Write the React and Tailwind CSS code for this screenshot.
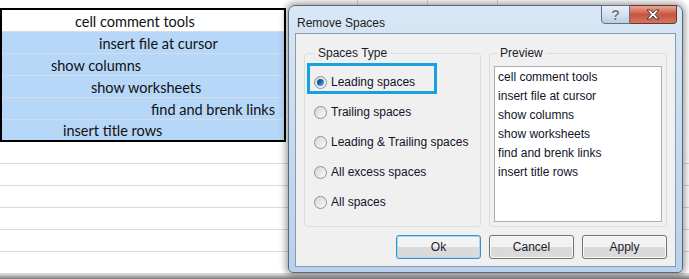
import React from 'react';

const sheetRows = [
  { text: 'cell comment tools', pl: 'pl-[73px]', sel: false },
  { text: 'insert file at cursor', pl: 'pl-[97px]', sel: true },
  { text: 'show columns', pl: 'pl-[49px]', sel: true },
  { text: 'show worksheets', pl: 'pl-[89px]', sel: true },
  { text: 'find and brenk links', pl: 'pl-[149px]', sel: true },
  { text: 'insert title rows', pl: 'pl-[61px]', sel: true },
];

const options = [
  'Leading spaces',
  'Trailing spaces',
  'Leading & Trailing spaces',
  'All excess spaces',
  'All spaces',
];

const previewLines = [
  'cell comment tools',
  'insert file at cursor',
  'show columns',
  'show worksheets',
  'find and brenk links',
  'insert title rows',
];

const Radio = ({ checked }) => (
  <span className="relative w-[13px] h-[13px] rounded-full border border-[#8f8f8f] bg-gradient-to-br from-[#d6d6d6] to-[#fbfbfb] flex items-center justify-center shrink-0">
    {checked && (
      <span className="w-[7px] h-[7px] rounded-full bg-gradient-to-br from-[#0b3f78] via-[#1e67b4] to-[#7fc0f5]" />
    )}
  </span>
);

const Button = ({ label, primary }) => (
  <button
    className={
      'w-[85px] h-[24px] rounded-[3px] border bg-gradient-to-b from-[#f2f2f2] from-50% to-[#dadada] to-50% text-[12px] text-[#1a1a2e] ' +
      (primary ? 'border-[#3c8fc4] shadow-[inset_0_0_0_1px_#9fdcf7]' : 'border-[#707070] shadow-[inset_0_0_0_1px_#fbfbfb]')
    }
  >
    {label}
  </button>
);

const Dialog = () => (
  <div className="absolute left-[288px] top-[5px] w-[395px] h-[268px] rounded-t-[7px] rounded-b-[5px] border border-[#58687a] bg-gradient-to-b from-[#d9e7f5] via-[#c6daf0] to-[#b9d1ec] shadow-[0_0_7px_2px_rgba(0,0,0,0.4)] flex flex-col px-[6px] pb-[5px] font-['Liberation_Sans',Arial,sans-serif]">
    {/* title bar */}
    <div className="h-[27px] flex items-start justify-between">
      <span className="pl-[2px] pt-[8px] text-[12px] text-[#1c1c1c]">Remove Spaces</span>
      <div className="flex -mt-px mr-[-1px]">
        <div className="w-[29px] h-[19px] border border-[#5f7088] rounded-bl-[4px] bg-gradient-to-b from-[#e9f0f8] via-[#d4e1ef] to-[#bccde2] flex items-center justify-center">
          <span className="text-[14px] font-bold leading-none text-[#6c7a8a] [text-shadow:0_0_2px_#fff]">?</span>
        </div>
        <div className="w-[47px] h-[19px] border border-l-0 border-[#6a362c] rounded-br-[4px] bg-gradient-to-b from-[#e9a896] via-[#c9543f] to-[#d7735c] flex items-center justify-center">
          <svg width="14" height="11" viewBox="0 0 14 11">
            <path
              d="M1 1h3.5L7 4l2.5-3H13L9 5.5 13 10H9.5L7 7l-2.5 3H1l4-4.5z"
              fill="#ffffff"
              stroke="#3b3b3b"
              strokeWidth="1"
              strokeLinejoin="round"
            />
          </svg>
        </div>
      </div>
    </div>

    {/* client area */}
    <div className="flex-1 border border-[#8a9bb0] bg-[#f0f0f0] flex flex-col pt-[12px] px-[8px] relative">
      <div className="flex gap-[8px]">
        <fieldset className="w-[178px] h-[181px] border border-[#d5dfe5] rounded-[3px] px-[10px]">
          <legend className="px-[3px] text-[12px] leading-[15px] text-[#1c1c2c]">Spaces Type</legend>
          <div className="flex flex-col pt-[6px]">
            {options.map((o, i) => (
              <label key={o} className="h-[30px] flex items-center gap-[4px] text-[12px] text-[#12122a] -ml-[1px]">
                <Radio checked={i === 0} />
                <span>{o}</span>
              </label>
            ))}
          </div>
        </fieldset>
        <fieldset className="w-[179px] h-[181px] border border-[#d5dfe5] rounded-[3px] px-[4px] pb-[4px]">
          <legend className="ml-[3px] px-[3px] text-[12px] leading-[15px] text-[#1c1c2c]">Preview</legend>
          <div className="mt-[5px] h-[156px] border border-[#abadb3] bg-white px-[3px] pt-[1px] text-[12px] leading-[19px] text-[#12122a]">
            {previewLines.map((l) => (
              <div key={l}>{l}</div>
            ))}
          </div>
        </fieldset>
      </div>
      <div className="flex justify-end gap-[8px] mt-[8px]">
        <Button label="Ok" primary />
        <Button label="Cancel" />
        <Button label="Apply" />
      </div>
      {/* highlight annotation */}
      <div className="absolute left-[11px] top-[29px] w-[130px] h-[31px] border-[3px] border-[#17a1df]" />
    </div>
  </div>
);

export default function App() {
  return (
    <div className="relative w-[689px] h-[279px] bg-white overflow-hidden">
      <div className="flex flex-col font-['Lato','Open_Sans',sans-serif] text-[14.5px] text-[#111]">
        {/* top strip */}
        <div className="h-[8px] flex">
          <div className="w-[357px]" />
          <div className="w-[70px] border-l border-[#d9d9d9]" />
          <div className="w-[70px] border-l border-[#d9d9d9]" />
          <div className="flex-1 border-l border-[#d9d9d9]" />
        </div>
        {/* selected block */}
        <div className="w-[286px] border-2 border-black">
          {sheetRows.map((r, i) => (
            <div
              key={r.text}
              className={
                'flex items-end leading-[18px] ' +
                r.pl +
                ' ' +
                (i === 5 ? 'h-[20px] ' : 'h-[22px] border-b ') +
                (r.sel ? 'bg-[#b7d7f8] border-[#d3dde8]' : 'bg-white border-[#d3dde8]')
              }
            >
              {r.text}
            </div>
          ))}
        </div>
        {/* empty rows */}
        {[0, 1, 2, 3, 4, 5].map((i) => (
          <div key={i} className="h-[22px] border-b border-[#d9d9d9]" />
        ))}
        <div className="h-[5px] bg-gradient-to-b from-[#dcdcdc] to-[#7a7a7a]" />
      </div>
      <Dialog />
    </div>
  );
}
